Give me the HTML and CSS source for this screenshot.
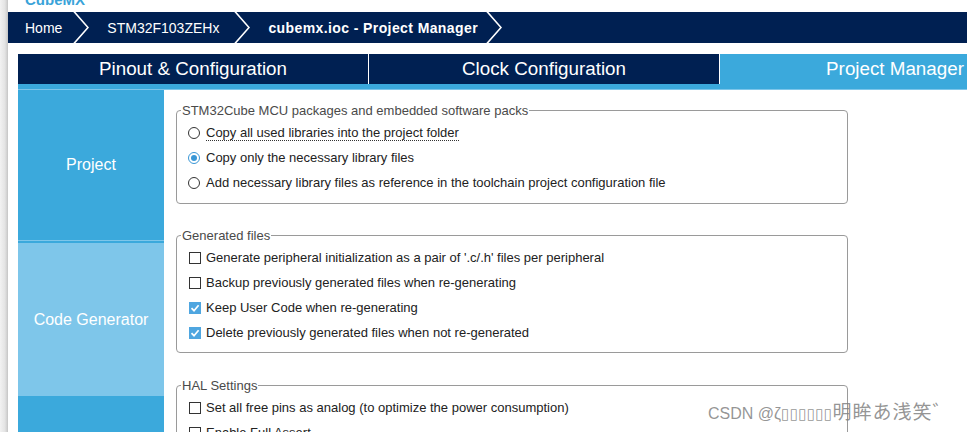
FILE: index.html
```html
<!DOCTYPE html>
<html lang="en">
<head>
<meta charset="utf-8">
<title>STM32CubeMX - Project Manager</title>
<link rel="stylesheet" href="styles.css">
</head>
<body>
<div class="app">
  <div class="edge"></div>
  <div class="main">
    <div class="brand"><span class="brand-text">CubeMX</span></div>
    <nav class="crumbs">
      <span class="crumb crumb-home">Home</span>
      <svg class="chev" width="16" height="31" viewBox="0 0 16 31"><polyline points="0.5,-1 15,15.5 0.5,32" fill="none" stroke="#fff" stroke-width="1.6"/></svg>
      <span class="crumb crumb-mcu">STM32F103ZEHx</span>
      <svg class="chev" width="16" height="31" viewBox="0 0 16 31"><polyline points="0.5,-1 15,15.5 0.5,32" fill="none" stroke="#fff" stroke-width="1.6"/></svg>
      <span class="crumb crumb-cur">cubemx.ioc - Project Manager</span>
      <svg class="chev" width="16" height="31" viewBox="0 0 16 31"><polyline points="0.5,-1 15,15.5 0.5,32" fill="none" stroke="#fff" stroke-width="1.6"/></svg>
    </nav>
    <div class="work">
      <div class="tabs">
        <div class="tab">Pinout &amp; Configuration</div>
        <div class="tab">Clock Configuration</div>
        <div class="tab tab-active">Project Manager</div>
      </div>
      <div class="band"></div>
      <div class="body">
        <aside class="side">
          <div class="side-item side-project">Project</div>
          <div class="side-item side-code">Code Generator</div>
          <div class="side-item side-adv">Advanced Settings</div>
        </aside>
        <section class="content">
          <fieldset class="group group-first">
            <legend>STM32Cube MCU packages and embedded software packs</legend>
            <div class="row"><span class="ctl"><span class="radio"></span></span><span class="label focus">Copy all used libraries into the project folder</span></div>
            <div class="row"><span class="ctl"><span class="radio radio-on"></span></span><span class="label">Copy only the necessary library files</span></div>
            <div class="row"><span class="ctl"><span class="radio"></span></span><span class="label">Add necessary library files as reference in the toolchain project configuration file</span></div>
          </fieldset>
          <fieldset class="group">
            <legend>Generated files</legend>
            <div class="row"><span class="ctl"><span class="check"></span></span><span class="label">Generate peripheral initialization as a pair of '.c/.h' files per peripheral</span></div>
            <div class="row"><span class="ctl"><span class="check"></span></span><span class="label">Backup previously generated files when re-generating</span></div>
            <div class="row"><span class="ctl"><span class="check check-on"><svg width="12" height="12" viewBox="0 0 12 12"><polyline points="2.5,6.2 5,8.7 9.6,3.3" fill="none" stroke="#fff" stroke-width="1.7"/></svg></span></span><span class="label">Keep User Code when re-generating</span></div>
            <div class="row"><span class="ctl"><span class="check check-on"><svg width="12" height="12" viewBox="0 0 12 12"><polyline points="2.5,6.2 5,8.7 9.6,3.3" fill="none" stroke="#fff" stroke-width="1.7"/></svg></span></span><span class="label">Delete previously generated files when not re-generated</span></div>
          </fieldset>
          <fieldset class="group group-last">
            <legend>HAL Settings</legend>
            <div class="row"><span class="ctl"><span class="check"></span></span><span class="label">Set all free pins as analog (to optimize the power consumption)</span></div>
            <div class="row"><span class="ctl"><span class="check"></span></span><span class="label">Enable Full Assert</span></div>
          </fieldset>
        </section>
      </div>
    </div>
  </div>
  <div class="watermark">CSDN @ζ<span class="tofu">▯▯▯▯▯▯</span><span class="cjk">明眸あ浅笑゛</span></div>
</div>
</body>
</html>
```

FILE: styles.css
```css
html, body {
  margin: 0;
  padding: 0;
  overflow: hidden;
  background: #ffffff;
}

.app {
  position: relative;
  display: flex;
  width: 1100px;
  height: 432px;
  overflow: hidden;
  font-family: "Liberation Sans", Arial, sans-serif;
}

.edge {
  flex: 0 0 8px;
  height: 432px;
  background: linear-gradient(to right, #f2f2f2 0%, #e4e4e4 60%, #d2d2d2 85%, #c4c4c4 100%);
}

.main {
  flex: 0 0 1092px;
  display: flex;
  flex-direction: column;
}

.main > * {
  flex-shrink: 0;
}

.brand {
  height: 12px;
  overflow: hidden;
  padding-left: 17px;
}

.brand-text {
  display: block;
  margin-top: -8px;
  font-size: 15px;
  line-height: 16px;
  font-weight: bold;
  color: #3aa3d9;
}

.crumbs {
  display: flex;
  align-items: center;
  height: 31px;
  background: #002052;
  color: #ffffff;
  font-size: 14px;
  padding-left: 17px;
}

.crumb {
  white-space: nowrap;
}

.crumb-home { margin-right: 11px; }
.crumb-mcu { margin-right: 15px; }
.crumb-cur {
  font-weight: bold;
  letter-spacing: 0.4px;
  margin-right: 8px;
}

.chev {
  flex: 0 0 16px;
  margin-right: 18px;
}

.work {
  margin-top: 11px;
  padding-left: 10px;
  display: flex;
  flex-direction: column;
}

.work > * {
  flex-shrink: 0;
}

.tabs {
  display: flex;
  height: 30px;
  gap: 1px;
  background: #ffffff;
}

.tab {
  flex: 0 0 350px;
  display: flex;
  align-items: center;
  justify-content: center;
  background: #002052;
  color: #ffffff;
  font-size: 18.8px;
  white-space: nowrap;
}

.tab-active {
  background: #3ba9dc;
}

.band {
  height: 5px;
  background: #3ba9dc;
  border-bottom: 1px solid #7ec6ea;
}

.body {
  display: flex;
}

.side {
  flex: 0 0 146px;
  display: flex;
  flex-direction: column;
  background: #3ba9dc;
  height: 460px;
}

.side-item {
  flex-shrink: 0;
  display: flex;
  align-items: center;
  justify-content: center;
  color: #ffffff;
  font-size: 16px;
}

.side-project {
  height: 150px;
  border-bottom: 1px solid #7ec6ea;
  margin-bottom: 2px;
}

.side-code {
  height: 153px;
  background: #7ec6ea;
}

.side-adv {
  height: 150px;
}

.content {
  flex: 1;
  padding-left: 12px;
}

.group {
  box-sizing: border-box;
  width: 672px;
  margin: 24px 0 0 0;
  padding: 2px 10px 7px 11px;
  border: 1px solid #9a9a9a;
  border-radius: 4px;
  min-inline-size: 0;
}

.group-first {
  margin-top: 13px;
  padding-bottom: 8px;
}

.group-last {
  margin-top: 25px;
}

.group legend {
  margin-left: -7px;
  padding: 0 1px;
  font-size: 13px;
  line-height: 15px;
  color: #4a4a4a;
}

.row {
  display: flex;
  align-items: center;
  height: 25px;
  font-size: 13px;
  color: #222222;
  white-space: nowrap;
}

.ctl {
  flex: 0 0 13px;
  height: 12px;
  margin-right: 5px;
  display: flex;
}

.radio {
  box-sizing: border-box;
  width: 12px;
  height: 12px;
  border: 1px solid #333333;
  border-radius: 50%;
  background: #ffffff;
  display: flex;
  align-items: center;
  justify-content: center;
}

.radio-on {
  border-color: #3a97d6;
}

.radio-on::after {
  content: "";
  width: 6px;
  height: 6px;
  border-radius: 50%;
  background: #3a97d6;
}

.check {
  box-sizing: border-box;
  width: 12px;
  height: 12px;
  margin-left: 1px;
  border: 1px solid #333333;
  background: #ffffff;
  display: flex;
}

.check-on {
  border: none;
  background: #4fa6e0;
}

.label {
  line-height: 15px;
}

.focus {
  border-bottom: 1px dotted #333333;
  line-height: 14px;
  margin-top: 2px;
}

.watermark {
  position: absolute;
  left: 708px;
  top: 400px;
  font-size: 16px;
  line-height: 22px;
  color: rgba(130, 130, 130, 0.85);
  white-space: nowrap;
  font-family: "Liberation Sans", Arial, "Noto Sans CJK JP", sans-serif;
}

.tofu {
  font-family: "DejaVu Sans", sans-serif;
  font-size: 15px;
  letter-spacing: 0.3px;
}

.cjk {
  font-family: "Noto Sans CJK JP", sans-serif;
  font-size: 19px;
  letter-spacing: 1px;
}
```
